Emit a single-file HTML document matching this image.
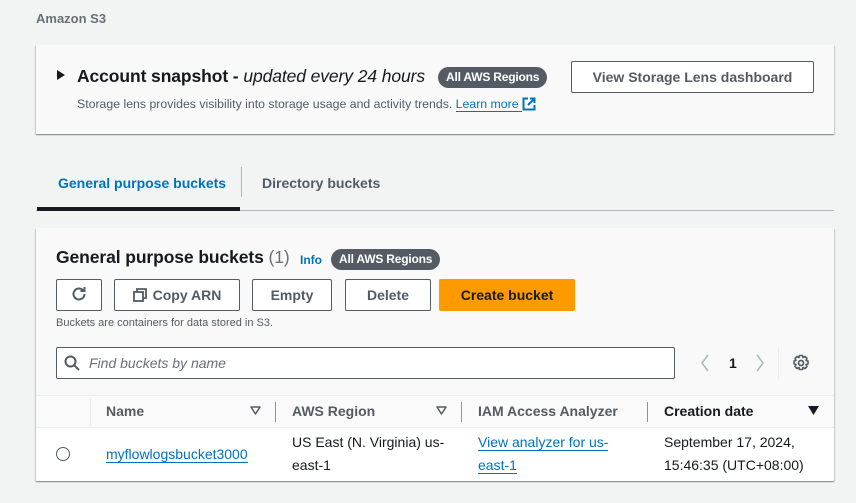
<!DOCTYPE html>
<html><head><meta charset="utf-8"><style>
*{box-sizing:border-box;margin:0;padding:0}
body{width:856px;height:503px;background:#f2f3f3;font-family:"Liberation Sans",sans-serif;color:#16191f;position:relative;overflow:hidden}
.abs{position:absolute}
.panel{position:absolute;left:36px;width:798px;background:#f9f9f9;box-shadow:0 1px 1px rgba(0,28,36,.3),1px 1px 1px rgba(0,28,36,.15),-1px 1px 1px rgba(0,28,36,.15)}
.badge{position:absolute;background:#545b64;color:#fff;font-size:12px;border-radius:11px;height:21px;line-height:21px;padding:0 8px;font-weight:bold;letter-spacing:-.2px}
.btn{position:absolute;border:1px solid #545b64;border-radius:2px;background:#fff;color:#545b64;font-weight:bold;font-size:14px;text-align:center;height:32px;line-height:30px}
a{color:#0073bb;text-decoration:none;border-bottom:1px solid #0073bb}
.th{position:absolute;top:403px;font-size:14px;font-weight:bold;color:#545b64}
.sep{position:absolute;top:402px;width:1px;height:20px;background:#879596}
.td{position:absolute;font-size:14px;line-height:23px;color:#16191f}
</style></head><body>
<div class="abs" style="left:36px;top:11px;font-size:13px;font-weight:bold;color:#687078">Amazon S3</div>

<div class="panel" style="top:45px;height:89px">
  <div class="abs" style="left:21px;top:25px;width:0;height:0;border-left:8px solid #16191f;border-top:5px solid transparent;border-bottom:5px solid transparent"></div>
  <div class="abs" style="left:41px;top:21px;font-size:17.5px;font-weight:bold;white-space:nowrap;letter-spacing:-.1px">Account snapshot - <span style="font-weight:normal;font-style:italic">updated every 24 hours</span></div>
  <div class="badge" style="left:402px;top:22px">All AWS Regions</div>
  <div class="abs" style="left:41px;top:52px;font-size:12.3px;color:#545b64;white-space:nowrap">Storage lens provides visibility into storage usage and activity trends. <a>Learn more&nbsp;</a></div>
  <svg class="abs" style="left:486px;top:52px" width="14" height="14" viewBox="0 0 14 14"><path d="M6 1.5H1.5v11h11V8" fill="none" stroke="#0073bb" stroke-width="2"/><path d="M8 1.5h4.5V6M12.5 1.5 6 8" fill="none" stroke="#0073bb" stroke-width="2"/></svg>
  <div class="btn" style="left:535px;top:16px;width:243px;height:32px;line-height:30px">View Storage Lens dashboard</div>
</div>

<div class="abs" style="left:58px;top:175px;font-size:14px;font-weight:bold;color:#0073bb">General purpose buckets</div>
<div class="abs" style="left:241px;top:167px;width:1px;height:30px;background:#aab7b8"></div>
<div class="abs" style="left:262px;top:175px;font-size:14px;font-weight:bold;color:#545b64">Directory buckets</div>
<div class="abs" style="left:36px;top:210px;width:798px;height:1px;background:#aab7b8"></div>
<div class="abs" style="left:37px;top:207px;width:203px;height:4px;background:#16191f"></div>

<div class="panel" style="top:228px;height:253px"></div>
<div class="abs" style="left:56px;top:247px;font-size:17.5px;font-weight:bold;white-space:nowrap;letter-spacing:-.1px">General purpose buckets <span style="font-weight:normal;color:#687078">(1)</span></div>
<div class="abs" style="left:300px;top:253px;font-size:12px;font-weight:bold;color:#0073bb">Info</div>
<div class="badge" style="left:331px;top:249px">All AWS Regions</div>

<div class="btn" style="left:56px;top:279px;width:46px"><svg width="18" height="18" viewBox="0 0 18 18" style="vertical-align:-3px"><path d="M14.5 9a5.5 5.5 0 1 1-1.6-3.9" fill="none" stroke="#545b64" stroke-width="2"/><path d="M14.5 2v4h-4" fill="none" stroke="#545b64" stroke-width="2"/></svg></div>
<div class="btn" style="left:114px;top:279px;width:126px"><svg width="14" height="14" viewBox="0 0 14 14" style="vertical-align:-2px;margin-right:6px"><rect x="1" y="4" width="9" height="9" fill="none" stroke="#545b64" stroke-width="1.8"/><path d="M4 4V1h9v9h-3" fill="none" stroke="#545b64" stroke-width="1.8"/></svg>Copy ARN</div>
<div class="btn" style="left:252px;top:279px;width:80px">Empty</div>
<div class="btn" style="left:345px;top:279px;width:86px">Delete</div>
<div class="btn" style="left:439px;top:279px;width:136px;background:#ff9900;border-color:#ff9900;color:#16191f">Create bucket</div>
<div class="abs" style="left:56px;top:317px;font-size:11px;color:#545b64">Buckets are containers for data stored in S3.</div>

<div class="abs" style="left:56px;top:347px;width:619px;height:32px;border:1px solid #545b64;border-radius:2px;background:#fff"></div>
<svg class="abs" style="left:64px;top:355px" width="16" height="16" viewBox="0 0 16 16"><circle cx="6.5" cy="6.5" r="5" fill="none" stroke="#545b64" stroke-width="2"/><path d="M10.2 10.2 15 15" stroke="#545b64" stroke-width="2"/></svg>
<div class="abs" style="left:89px;top:355px;font-size:14px;font-style:italic;color:#687078">Find buckets by name</div>
<svg class="abs" style="left:700px;top:354px" width="10" height="18" viewBox="0 0 10 18"><path d="M8 1 2 9l6 8" fill="none" stroke="#aab7b8" stroke-width="1.5"/></svg>
<div class="abs" style="left:729px;top:355px;font-size:14px;font-weight:bold">1</div>
<svg class="abs" style="left:755px;top:354px" width="10" height="18" viewBox="0 0 10 18"><path d="M2 1l6 8-6 8" fill="none" stroke="#aab7b8" stroke-width="1.5"/></svg>
<div class="abs" style="left:778px;top:347px;width:1px;height:32px;background:#eaeded"></div>
<svg class="abs" style="left:792px;top:354px" width="18" height="18" viewBox="0 0 18 18"><circle cx="9" cy="9" r="2.5" fill="none" stroke="#545b64" stroke-width="1.8"/><path d="M7.5 1.5h3l.5 2 2-1 2 2-1 2 2 .5v3l-2 .5 1 2-2 2-2-1-.5 2h-3l-.5-2-2 1-2-2 1-2-2-.5v-3l2-.5-1-2 2-2 2 1z" fill="none" stroke="#545b64" stroke-width="1.6" stroke-linejoin="round"/></svg>

<div class="abs" style="left:36px;top:395px;width:798px;height:1px;background:#eaeded"></div>
<div class="abs" style="left:36px;top:396px;width:798px;height:31px;background:#fafafa"></div>
<div class="abs" style="left:90px;top:398px;width:1px;height:28px;background:#eaeded"></div>
<div class="th" style="left:106px">Name</div>
<svg class="abs" style="left:250px;top:406px" width="11" height="9" viewBox="0 0 11 9"><path d="M1 1h9L5.5 8z" fill="none" stroke="#545b64" stroke-width="1.5" stroke-linejoin="round"/></svg>
<div class="sep" style="left:275px"></div>
<div class="th" style="left:292px">AWS Region</div>
<svg class="abs" style="left:436px;top:406px" width="11" height="9" viewBox="0 0 11 9"><path d="M1 1h9L5.5 8z" fill="none" stroke="#545b64" stroke-width="1.5" stroke-linejoin="round"/></svg>
<div class="sep" style="left:461px"></div>
<div class="th" style="left:478px">IAM Access Analyzer</div>
<div class="sep" style="left:647px"></div>
<div class="th" style="left:664px;color:#16191f">Creation date</div>
<svg class="abs" style="left:808px;top:406px" width="11" height="9" viewBox="0 0 11 9"><path d="M0 0h11L5.5 9z" fill="#16191f"/></svg>
<div class="abs" style="left:36px;top:427px;width:798px;height:1px;background:#eaeded"></div>
<div class="abs" style="left:36px;top:428px;width:798px;height:53px;background:#fff"></div>

<div class="abs" style="left:56px;top:447px;width:14px;height:14px;border:1.5px solid #545b64;border-radius:50%"></div>
<div class="td" style="left:106px;top:443px"><a>myflowlogsbucket3000</a></div>
<div class="td" style="left:292px;top:431px">US East (N. Virginia) us-<br>east-1</div>
<div class="td" style="left:478px;top:431px"><a>View analyzer for us-</a><br><a>east-1</a></div>
<div class="td" style="left:664px;top:431px">September 17, 2024,<br>15:46:35 (UTC+08:00)</div>
</body></html>
